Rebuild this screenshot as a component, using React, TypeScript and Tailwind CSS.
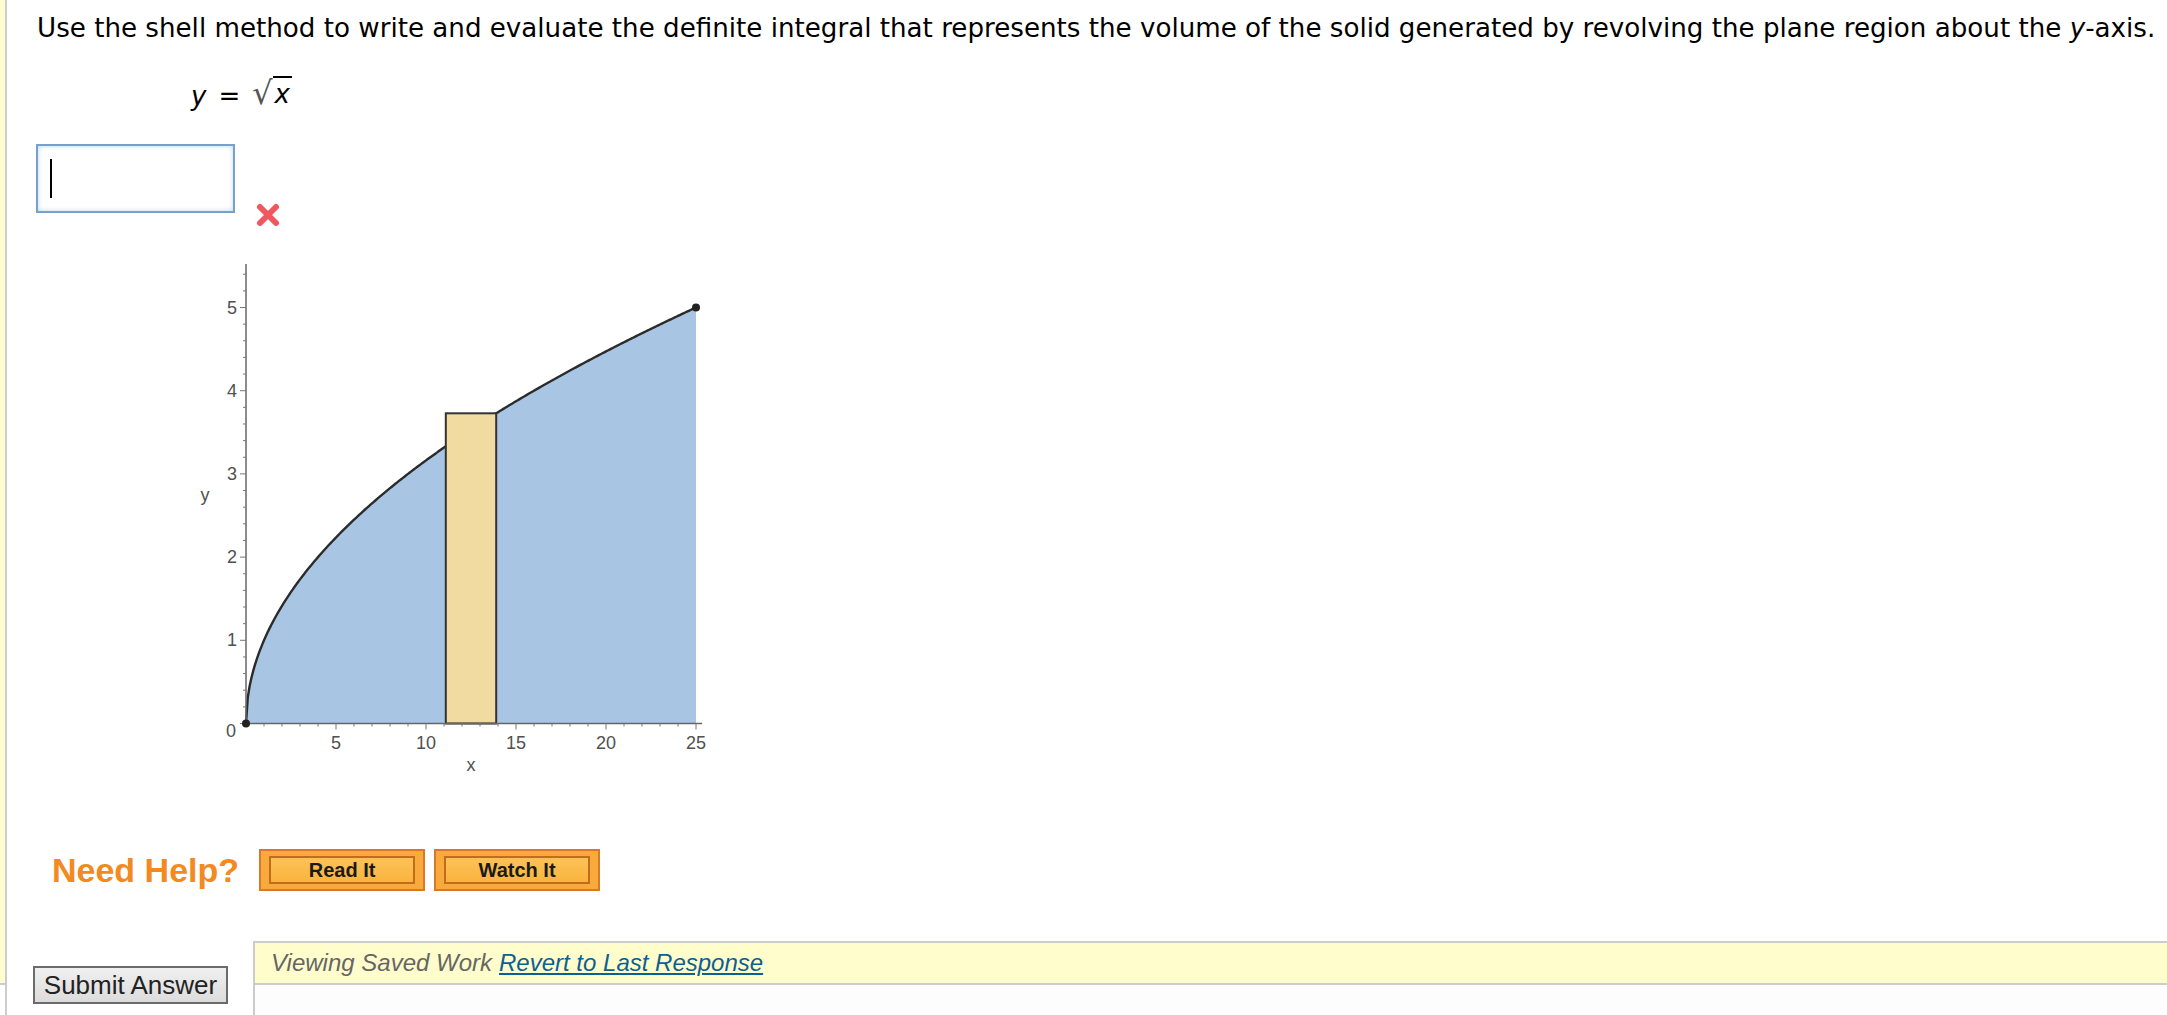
import React from "react";

// chart mapping, in page pixels
const X0 = 246;
const Y0 = 721.5;
const SX = 18;
const SY = 83.2;
const px = (x: number) => X0 + SX * x;
const py = (y: number) => Y0 - SY * y;

function ShellChart() {
  const pts: string[] = [];
  for (let i = 0; i <= 250; i++) {
    const x = i / 10;
    pts.push(`${px(x).toFixed(2)},${py(Math.sqrt(x)).toFixed(2)}`);
  }
  const curve = "M" + pts.join(" L");
  const area = curve + ` L${px(25)},${py(0)} L${px(0)},${py(0)} Z`;

  const rx0 = 11.1;
  const rx1 = 13.9;
  const rTop = py(Math.sqrt(rx1));

  const yTicks: number[] = [];
  for (let i = 0; i <= 27; i++) yTicks.push(i * 0.2);
  const xTicks: number[] = [];
  for (let i = 1; i <= 25; i++) xTicks.push(i);

  return (
    <svg
      width={723}
      height={540}
      viewBox="7 250 723 540"
      className="block"
      style={{ fontFamily: '"Liberation Sans", Arial, sans-serif' }}
    >
      <path d={area} fill="#a8c6e4" />
      <path d={curve} fill="none" stroke="#2b2b2b" strokeWidth={2.4} />
      <rect
        x={px(rx0)}
        y={rTop}
        width={px(rx1) - px(rx0)}
        height={Y0 - rTop}
        fill="#f2dba0"
        stroke="#333"
        strokeWidth={2}
      />

      {/* y axis */}
      <line x1={X0} y1={262} x2={X0} y2={Y0} stroke="#666" strokeWidth={1.5} />
      {yTicks.map((t) => {
        const major = Math.abs(t - Math.round(t)) < 0.001;
        return (
          <line
            key={"y" + t}
            x1={major ? X0 - 6 : X0 - 3}
            y1={py(t)}
            x2={X0}
            y2={py(t)}
            stroke="#777"
            strokeWidth={1}
          />
        );
      })}
      {[1, 2, 3, 4, 5].map((t) => (
        <text key={"yl" + t} x={237} y={py(t) + 6} fontSize={18} fill="#505050" textAnchor="end">
          {t}
        </text>
      ))}
      <text x={236} y={735} fontSize={18} fill="#505050" textAnchor="end">
        0
      </text>
      <text x={205} y={499} fontSize={18} fill="#505050" textAnchor="middle">
        y
      </text>

      {/* x axis */}
      <line x1={X0} y1={Y0} x2={702} y2={Y0} stroke="#666" strokeWidth={1.5} />
      {xTicks.map((t) => (
        <line
          key={"x" + t}
          x1={px(t)}
          y1={Y0}
          x2={px(t)}
          y2={t % 5 === 0 ? Y0 + 6 : Y0 + 3}
          stroke="#777"
          strokeWidth={1}
        />
      ))}
      {[5, 10, 15, 20, 25].map((t) => (
        <text key={"xl" + t} x={px(t)} y={747} fontSize={18} fill="#505050" textAnchor="middle">
          {t}
        </text>
      ))}
      <text x={471} y={769} fontSize={18} fill="#505050" textAnchor="middle">
        x
      </text>

      <circle cx={px(0)} cy={py(0)} r={4} fill="#222" />
      <circle cx={px(25)} cy={py(5)} r={4} fill="#222" />
    </svg>
  );
}

function HelpButton({ label }: { label: string }) {
  return (
    <div className="h-[42px] w-[166px] border-2 border-[#d9782a] bg-[#f9aa3c] p-[5px_8px]">
      <div className="flex h-full w-full items-center justify-center border-2 border-[#c06d1e] bg-gradient-to-b from-[#fcc257] to-[#fab43e]">
        <span className="text-[20px] font-bold leading-none text-[#1a1a1a]">{label}</span>
      </div>
    </div>
  );
}

export default function App() {
  return (
    <div className="flex min-h-[1015px] w-full bg-white" style={{ fontFamily: '"Liberation Sans", Arial, sans-serif' }}>
      {/* left marker strip */}
      <div className="w-[5px] shrink-0">
        <div className="h-[985px] border-b-2 border-[#cccccc] bg-[#fffdd0]" />
      </div>

      <div className="flex min-w-0 flex-1 flex-col border-l-2 border-[#cccccc]">
        {/* question */}
        <div
          className="whitespace-nowrap pl-[30px] pt-[15px] text-[26.15px] leading-none text-black"
          style={{ fontFamily: '"DejaVu Sans", Verdana, sans-serif' }}
        >
          Use the shell method to write and evaluate the definite integral that represents the volume of the solid
          generated by revolving the plane region about the <i>y</i>-axis.
        </div>

        <div
          className="mt-[34px] flex h-[34px] items-end pl-[184px] text-[26px] leading-none text-black"
          style={{ fontFamily: '"DejaVu Sans", Verdana, sans-serif' }}
        >
          <i>y</i>
          <span className="ml-[12px]">=</span>
          <span className="ml-[12px] text-[32px] leading-none text-[#555]">√</span>
          <span className="mb-[2px] border-t-2 border-black pl-[2px] pr-[2px] pt-[3px] italic">x</span>
        </div>

        {/* answer box */}
        <div className="mt-[35px] flex items-start pl-[29px]">
          <div className="flex h-[69px] w-[199px] items-center border-2 border-[#77a1c9] bg-white pl-[12px] shadow-[inset_0_0_5px_#bcd6f2]">
            <div className="h-[39px] w-[2px] bg-black" />
          </div>
          <div className="ml-[20px] mt-[58px]">
            <svg width="26" height="26" viewBox="0 0 26 26">
              <path d="M5 5 L21 21 M21 5 L5 21" stroke="#f0575e" strokeWidth="6" strokeLinecap="round" />
            </svg>
          </div>
        </div>

        {/* graph */}
        <div className="mt-[24px]">
          <ShellChart />
        </div>

        {/* help */}
        <div className="mt-[57px] flex h-[42px] items-center">
          <span className="ml-[45px] text-[34px] font-bold leading-none text-[#f28a1f]">Need Help?</span>
          <div className="ml-[20px] flex gap-[9px]">
            <HelpButton label="Read It" />
            <HelpButton label="Watch It" />
          </div>
        </div>

        {/* submit + saved work */}
        <div className="mt-[50px] flex flex-1">
          <div className="w-[246px] shrink-0 pl-[26px] pt-[25px]">
            <div className="flex h-[38px] w-[195px] items-center justify-center border-2 border-[#6b6b6b] bg-gradient-to-b from-[#f0f0f0] to-[#dcdcdc]">
              <span className="text-[26px] leading-none text-[#222]">Submit Answer</span>
            </div>
          </div>
          <div className="flex flex-1 flex-col border-l-2 border-[#cccccc] bg-[#fdfdfd]">
            <div className="flex h-[44px] items-center border-y-2 border-[#cccccc] bg-[#fffdcc] pl-[16px] text-[24px] italic leading-none">
              <span className="text-[#666]">Viewing Saved Work</span>
              <a href="#" className="ml-[7px] text-[#0e5f92] underline decoration-2 underline-offset-2">
                Revert to Last Response
              </a>
            </div>
          </div>
        </div>
      </div>
    </div>
  );
}
